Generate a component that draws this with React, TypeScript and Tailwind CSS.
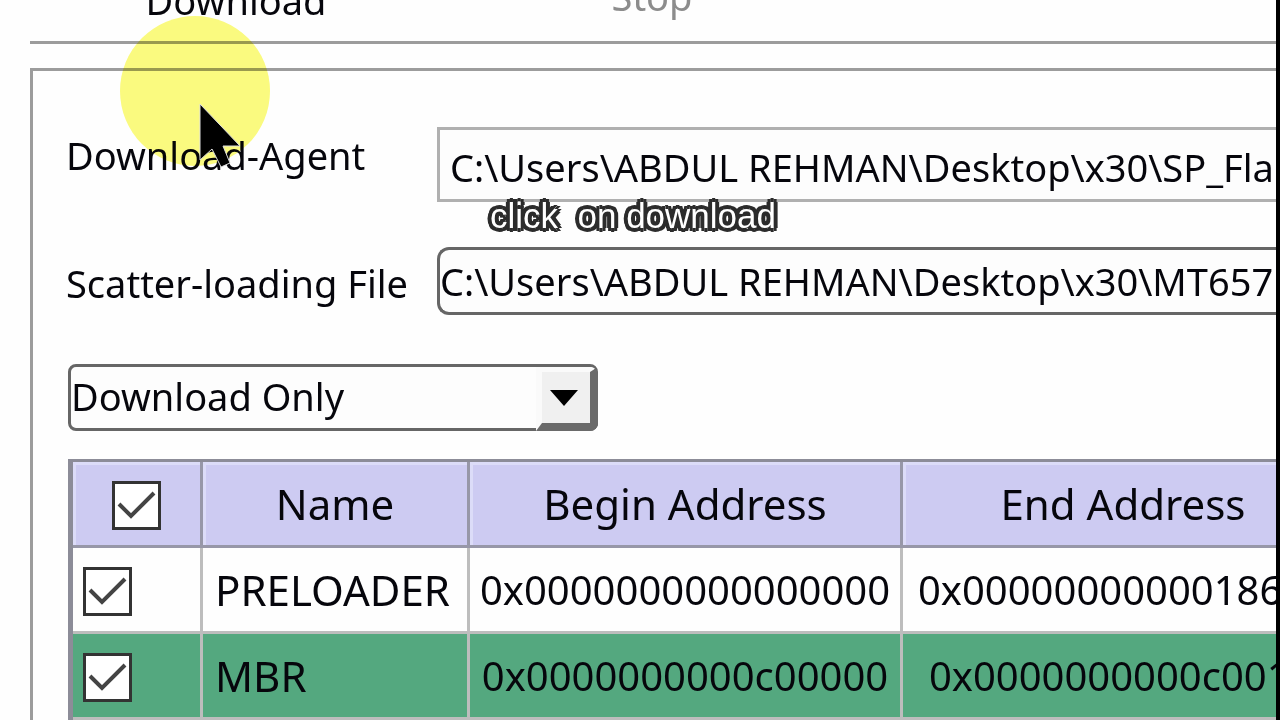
const Tick = ({ label }: { label: string }) => (
  <label className="inline-grid align-middle">
    <input
      type="checkbox"
      defaultChecked
      aria-label={label}
      className="peer [grid-area:1/1] appearance-none w-[49px] h-[49px] bg-white border-[3px] border-[#333]"
    />
    <svg
      viewBox="0 0 49 49"
      className="[grid-area:1/1] w-[49px] h-[49px] pointer-events-none invisible peer-checked:visible"
      fill="none"
      stroke="#444"
      strokeWidth="4"
    >
      <path d="M7 23 L19 35 L42 12" />
    </svg>
  </label>
);

const App = () => {
  const rows = [
    {
      name: "PRELOADER",
      begin: "0x0000000000000000",
      end: "0x0000000000018697",
      color: "bg-[#fefefe]",
    },
    {
      name: "MBR",
      begin: "0x0000000000c00000",
      end: "0x0000000000c001ff",
      color: "bg-[#54a87f]",
    },
  ];
  const th =
    "font-normal p-0 border-r-[3px] border-b-[3px] border-[#9797a8] shadow-[inset_3px_3px_0_#dcdcf8]";
  const td = "p-0 border-r-[3px] border-b-[3px] border-[#bdbdbd]";

  return (
    <div className="relative flex h-screen overflow-hidden bg-[#fefefe] text-[#06060c] font-['Noto_Sans',sans-serif] text-[38px] leading-[48px]">
      <main className="flex-1 min-w-0 flex flex-col overflow-hidden pl-[30px]">
        <div className="flex items-start h-11 shrink-0 overflow-hidden border-b-[3px] border-[#9c9c9c]">
          <button className="-mt-6 w-[412px] shrink-0 text-center">
            Download
          </button>
          <button className="-mt-7 w-[420px] shrink-0 text-center text-[#8c8c8c]" disabled>
            Stop
          </button>
        </div>

        <section className="mt-6 pl-[33px] flex-1 border-t-[3px] border-l-[3px] border-[#9c9c9c]">
          <div className="flex items-start pt-[56px]">
            <label htmlFor="agent" className="w-[371px] shrink-0 pt-1">
              Download-Agent
            </label>
            <input
              id="agent"
              type="text"
              defaultValue="C:\Users\ABDUL REHMAN\Desktop\x30\SP_Fla"
              className="flex-1 min-w-0 h-[75px] pl-2.5 pt-1 bg-[#fdfdfd] border-y-[3px] border-l-[3px] border-[#b0b0b0] outline-none"
            />
          </div>

          <div className="flex items-center pt-[45px]">
            <label htmlFor="scatter" className="w-[371px] shrink-0 whitespace-nowrap pt-1">
              Scatter-loading File
            </label>
            <input
              id="scatter"
              type="text"
              defaultValue="C:\Users\ABDUL REHMAN\Desktop\x30\MT657"
              className="flex-1 min-w-0 h-[68px] bg-[#fdfdfd] border-y-[3px] border-l-[3px] border-[#666] rounded-l-xl outline-none"
            />
          </div>

          <div className="relative w-[530px] ml-0.5 mt-[49px]">
            <select
              aria-label="Download mode"
              className="block appearance-none w-full h-[67px] pb-1 bg-[#fdfdfd] border-[3px] border-[#666] rounded-lg outline-none"
            >
              <option>Download Only</option>
            </select>
            <div className="absolute top-[3px] right-0 bottom-0 w-[62px] flex items-center justify-center pr-1 bg-[#f0f0f0] border-l-[6px] border-t-[5px] border-r-8 border-b-8 border-l-[#fafafa] border-t-[#fafafa] border-r-[#6a6a6a] border-b-[#6a6a6a] rounded-r-lg pointer-events-none">
              <svg viewBox="0 0 28 16" className="w-7 h-4">
                <path d="M0 0 H28 L14 16 Z" fill="#000" />
              </svg>
            </div>
          </div>

          <table className="table-fixed w-[1278px] ml-0.5 mt-7 border-separate border-spacing-0 border-t-[3px] border-l-[5px] border-[#8c8c98] text-[42px]">
            <colgroup>
              <col className="w-[130px]" />
              <col className="w-[267px]" />
              <col className="w-[433px]" />
              <col className="w-[443px]" />
            </colgroup>
            <thead>
              <tr className="h-[86px] bg-[#cdcbf2]">
                <th className={th}>
                  <Tick label="Select all" />
                </th>
                <th className={th}>Name</th>
                <th className={th}>Begin Address</th>
                <th className={th}>End Address</th>
              </tr>
            </thead>
            <tbody>
              {rows.map((row) => (
                <tr key={row.name} className={"h-[86px] " + row.color}>
                  <td className={td + " pl-2.5"}>
                    <Tick label={row.name} />
                  </td>
                  <td className={td + " pl-3"}>{row.name}</td>
                  <td className={td + " text-center text-[40px]"}>{row.begin}</td>
                  <td className={td + " text-center text-[40px]"}>{row.end}</td>
                </tr>
              ))}
            </tbody>
          </table>
        </section>
      </main>
      <div className="w-1 shrink-0 bg-black" />

      {/* pointer highlight */}
      <div className="absolute left-[120px] top-4 w-[150px] h-[150px] rounded-full bg-[#fbfb80] mix-blend-multiply pointer-events-none" />
      <svg
        viewBox="0 0 42 66"
        className="absolute left-[199px] top-[103px] w-[42px] h-[66px] pointer-events-none"
      >
        <path
          d="M1 1 V57 L13 46 L22 64 L31 60 L24 43 H41 Z"
          fill="#000"
          stroke="#ddd"
          strokeWidth="1"
        />
      </svg>

      {/* caption */}
      <p className="absolute left-[490px] top-48 whitespace-pre font-['Liberation_Sans',sans-serif] text-[35px] text-white [text-shadow:4px_0_#2c2c2c,-4px_0_#2c2c2c,0_4px_#2c2c2c,0_-4px_#2c2c2c,3px_3px_#2c2c2c,-3px_3px_#2c2c2c,3px_-3px_#2c2c2c,-3px_-3px_#2c2c2c,2px_0_#2c2c2c,-2px_0_#2c2c2c] pointer-events-none">
        {"click  on download"}
      </p>
    </div>
  );
};

export default App;
